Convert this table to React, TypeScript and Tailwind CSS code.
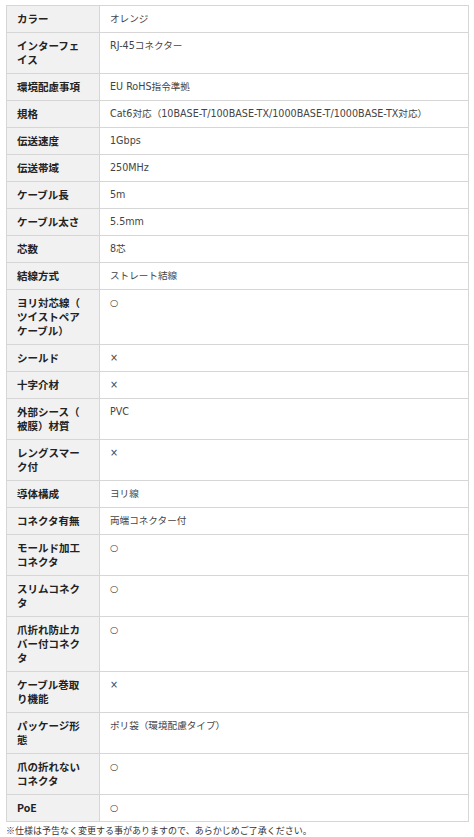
const specs: [string, string][] = [
  ["カラー", "オレンジ"],
  ["インターフェイス", "RJ-45コネクター"],
  ["環境配慮事項", "EU RoHS指令準拠"],
  ["規格", "Cat6対応（10BASE-T/100BASE-TX/1000BASE-T/1000BASE-TX対応）"],
  ["伝送速度", "1Gbps"],
  ["伝送帯域", "250MHz"],
  ["ケーブル長", "5m"],
  ["ケーブル太さ", "5.5mm"],
  ["芯数", "8芯"],
  ["結線方式", "ストレート結線"],
  ["ヨリ対芯線（ツイストペアケーブル）", "○"],
  ["シールド", "×"],
  ["十字介材", "×"],
  ["外部シース（被膜）材質", "PVC"],
  ["レングスマーク付", "×"],
  ["導体構成", "ヨリ線"],
  ["コネクタ有無", "両端コネクター付"],
  ["モールド加工コネクタ", "○"],
  ["スリムコネクタ", "○"],
  ["爪折れ防止カバー付コネクタ", "○"],
  ["ケーブル巻取り機能", "×"],
  ["パッケージ形態", "ポリ袋（環境配慮タイプ）"],
  ["爪の折れないコネクタ", "○"],
  ["PoE", "○"],
];

export default function App() {
  return (
    <div className="w-[474px] h-[837px] bg-white pt-[5px] pl-[6px]">
      <div className="w-[463px] border border-[#d6d6d6]">
        {specs.map(([label, value], i) => (
          <div
            key={label}
            className={`flex ${i < specs.length - 1 ? "border-b border-[#d6d6d6]" : ""}`}
          >
            <div className="w-[93px] shrink-0 bg-[#f1f1f1] border-r border-[#d6d6d6] pl-[10px] pr-[14px] py-[6px] text-[10.5px] leading-[14px] font-bold text-[#222] font-['Noto_Sans_CJK_JP',sans-serif] [line-break:anywhere]">
              {label}
            </div>
            <div className="flex-1 pl-[10px] pr-2 py-[6px] text-[9.6px] leading-[14px] text-[#444] font-['DejaVu_Sans','Noto_Sans_CJK_JP',sans-serif]">
              {value}
            </div>
          </div>
        ))}
      </div>
      <p className="mt-[2px] text-[9px] leading-[14px] text-[#333] font-['Noto_Sans_CJK_JP',sans-serif]">
        ※仕様は予告なく変更する事がありますので、あらかじめご了承ください。
      </p>
    </div>
  );
}
